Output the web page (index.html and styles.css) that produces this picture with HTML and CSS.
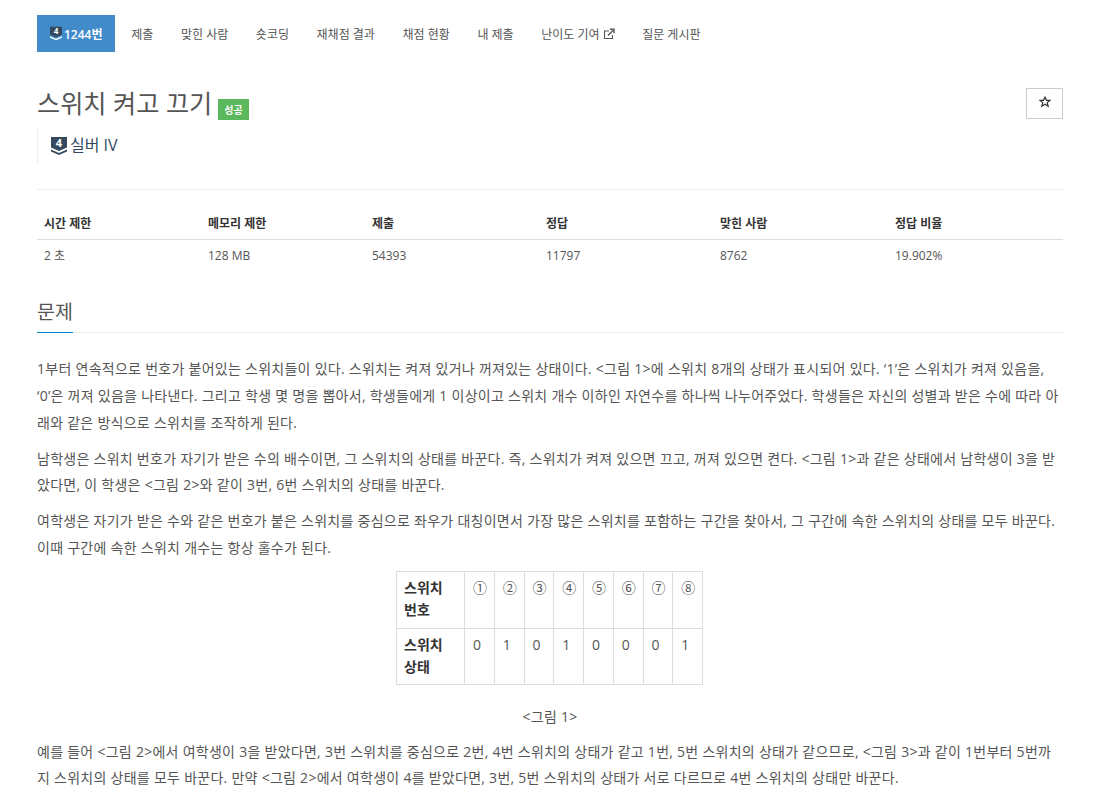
FILE: index.html
```html
<!DOCTYPE html>
<html lang="ko">
<head>
    <meta charset="utf-8">
    <title>스위치 켜고 끄기</title>
    <link rel="stylesheet" href="styles.css">
</head>
<body>
<div class="container">
    <ul class="tabs">
        <li class="active">
            <svg class="tier tier-small" viewBox="0 0 16 20"><path d="M0 1H16V11.5L8 15L0 11.5Z" fill="#34495e"/><path d="M0 13.5L8 17L16 13.5V15.5L8 19L0 15.5Z" fill="#fff"/><text x="8" y="11" class="tier-num">4</text></svg>
            <span>1244번</span>
        </li>
        <li>제출</li>
        <li>맞힌 사람</li>
        <li>숏코딩</li>
        <li>재채점 결과</li>
        <li>채점 현황</li>
        <li>내 제출</li>
        <li>난이도 기여
            <svg class="ext" viewBox="0 0 12 12"><path d="M9.5 7V10.5H1.5V3H6" fill="none" stroke="#555" stroke-width="1.1"/><path d="M5 7.5L10 2.5M7 1.2H11V5.2" fill="none" stroke="#555" stroke-width="1.4"/></svg>
        </li>
        <li>질문 게시판</li>
    </ul>

    <div class="title-row">
        <div>
            <div class="title-line">
                <h1>스위치 켜고 끄기</h1>
                <span class="label">성공</span>
            </div>
            <div class="tier-quote">
                <svg class="tier" viewBox="0 0 16 20"><path d="M0 1H16V11.5L8 15L0 11.5Z" fill="#34495e"/><path d="M0 13.5L8 17L16 13.5V15.5L8 19L0 15.5Z" fill="#34495e"/><text x="8" y="11" class="tier-num">4</text></svg>
                <span>실버 IV</span>
            </div>
        </div>
        <button class="star-btn">
            <svg class="star" viewBox="0 0 14 14"><path d="M7 1.3L8.7 5H12.8L9.6 7.7L10.7 12L7 9.7L3.3 12L4.4 7.7L1.2 5H5.3Z" fill="none" stroke="#333" stroke-width="1.4"/></svg>
        </button>
    </div>

    <table class="info">
        <thead>
            <tr>
                <th class="col-a">시간 제한</th>
                <th class="col-a">메모리 제한</th>
                <th class="col-b">제출</th>
                <th class="col-b">정답</th>
                <th class="col-c">맞힌 사람</th>
                <th class="col-c">정답 비율</th>
            </tr>
        </thead>
        <tbody>
            <tr>
                <td>2 초</td>
                <td>128 MB</td>
                <td>54393</td>
                <td>11797</td>
                <td>8762</td>
                <td>19.902%</td>
            </tr>
        </tbody>
    </table>

    <div class="headline"><h2>문제</h2></div>

    <div class="problem">
        <p>1부터 연속적으로 번호가 붙어있는 스위치들이 있다. 스위치는 켜져 있거나 꺼져있는 상태이다. &lt;그림 1&gt;에 스위치 8개의 상태가 표시되어 있다. ‘1’은 스위치가 켜져 있음을, ‘0’은 꺼져 있음을 나타낸다. 그리고 학생 몇 명을 뽑아서, 학생들에게 1 이상이고 스위치 개수 이하인 자연수를 하나씩 나누어주었다. 학생들은 자신의 성별과 받은 수에 따라 아래와 같은 방식으로 스위치를 조작하게 된다.</p>
        <p>남학생은 스위치 번호가 자기가 받은 수의 배수이면, 그 스위치의 상태를 바꾼다. 즉, 스위치가 켜져 있으면 끄고, 꺼져 있으면 켠다. &lt;그림 1&gt;과 같은 상태에서 남학생이 3을 받았다면, 이 학생은 &lt;그림 2&gt;와 같이 3번, 6번 스위치의 상태를 바꾼다.</p>
        <p>여학생은 자기가 받은 수와 같은 번호가 붙은 스위치를 중심으로 좌우가 대칭이면서 가장 많은 스위치를 포함하는 구간을 찾아서, 그 구간에 속한 스위치의 상태를 모두 바꾼다. 이때 구간에 속한 스위치 개수는 항상 홀수가 된다.</p>
        <table class="switches">
            <tr>
                <th>스위치<br>번호</th>
                <td>①</td><td>②</td><td>③</td><td>④</td><td>⑤</td><td>⑥</td><td>⑦</td><td>⑧</td>
            </tr>
            <tr>
                <th>스위치<br>상태</th>
                <td>0</td><td>1</td><td>0</td><td>1</td><td>0</td><td>0</td><td>0</td><td>1</td>
            </tr>
        </table>
        <p class="caption">&lt;그림 1&gt;</p>
        <p>예를 들어 &lt;그림 2&gt;에서 여학생이 3을 받았다면, 3번 스위치를 중심으로 2번, 4번 스위치의 상태가 같고 1번, 5번 스위치의 상태가 같으므로, &lt;그림 3&gt;과 같이 1번부터 5번까지 스위치의 상태를 모두 바꾼다. 만약 &lt;그림 2&gt;에서 여학생이 4를 받았다면, 3번, 5번 스위치의 상태가 서로 다르므로 4번 스위치의 상태만 바꾼다.</p>
    </div>
</div>
</body>
</html>
```

FILE: styles.css
```css
* { box-sizing: border-box; }
html, body { overflow: hidden; height: 799px; }
body { margin: 0; font-family: "Open Sans", "Noto Sans CJK KR", sans-serif; font-size: 12px; color: #555; background: #fff; }
.container { padding: 15px 39px 0 37px; }

.tabs { display: flex; list-style: none; margin: 0; padding: 0; height: 37px; font-size: 12px; }
.tabs li { display: flex; align-items: center; gap: 3px; padding: 0 13.8px; white-space: nowrap; }
.tabs .active { background: #428bca; color: #fff; font-weight: 600; padding: 0 12.5px 0 13px; gap: 2px; margin-right: 2.5px; }
.tier { width: 16px; height: 20px; }
.tier-small { width: 12px; height: 15px; }
.tier-num { font-size: 11px; font-weight: 700; fill: #fff; text-anchor: middle; font-family: "Open Sans", sans-serif; }
.ext { width: 12px; height: 12px; }

.title-row { display: flex; justify-content: space-between; align-items: flex-start; margin-top: 35px; height: 103px; border-bottom: 1px solid #eee; }
.title-line { display: flex; align-items: flex-end; gap: 6px; height: 33px; }
h1 { margin: 0 0 1px; font-size: 25.2px; font-weight: 400; line-height: 31px; color: #555; }
.label { background: #5cb85c; color: #fff; font-size: 10px; font-weight: 700; height: 21px; padding: 0 6px; display: flex; align-items: center; }
.tier-quote { display: flex; align-items: center; gap: 3px; margin-top: 8px; height: 35px; padding-left: 13px; border-left: 1px solid #eee; font-size: 16px; line-height: 30px; color: #34495e; }
.tier-quote span { margin-top: -2px; }
.star-btn { display: flex; align-items: center; justify-content: center; width: 37px; height: 31px; margin-top: 1px; background: #fff; border: 1px solid #ccc; padding: 0; }
.star { width: 12px; height: 12px; margin-top: -3px; }

.info { width: 100%; border-collapse: collapse; table-layout: fixed; margin-top: 15px; }
.info th { height: 34px; padding: 2px 7px 0; text-align: left; font-size: 12px; font-weight: 700; color: #333; border-bottom: 1px solid #ddd; }
.info td { height: 32px; padding: 0 7px; font-size: 12px; }
.col-a { width: 164px; }
.col-b { width: 174px; }
.col-c { width: 175px; }

.headline { margin-top: 25px; border-bottom: 1px dotted #ddd; height: 37px; }
h2 { display: inline-block; margin: 0; height: 37px; font-size: 19.5px; font-weight: 400; line-height: 32px; color: #555; border-bottom: 1px solid #0084c8; }

.problem { margin-top: 23px; font-size: 14px; line-height: 26.8px; letter-spacing: .27px; }
.problem p { margin: 0 0 9.2px; }
.switches { border-collapse: collapse; table-layout: fixed; width: 307px; margin: 0 0 0 359px; line-height: 22px; letter-spacing: 0; }
.switches th, .switches td { border: 1px solid #ddd; padding: 5px 7px 0; height: 56.5px; vertical-align: top; text-align: left; font-weight: 400; }
.switches td { padding: 5px 0 0 8px; }
.switches th { width: 68px; font-weight: 700; color: #333; }
.problem .caption { text-align: center; margin: 18.6px 0 8px; }
```
